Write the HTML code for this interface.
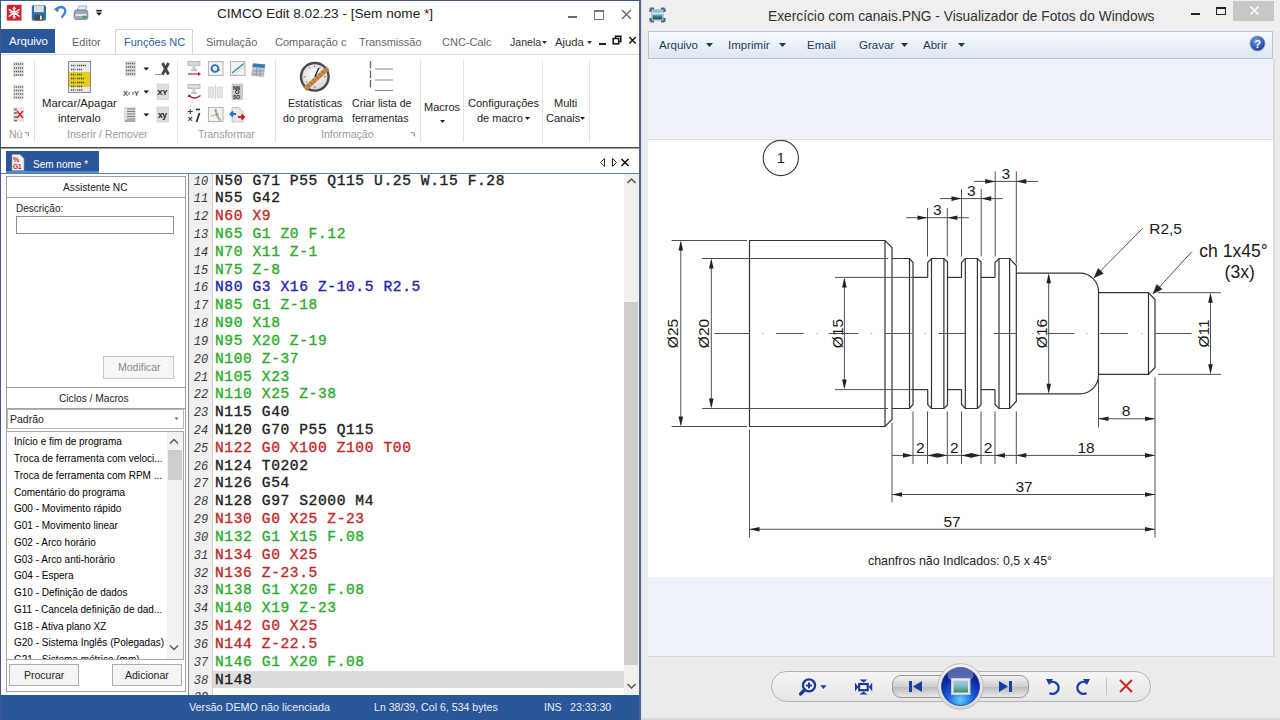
<!DOCTYPE html>
<html><head><meta charset="utf-8">
<style>
*{box-sizing:border-box}
html,body{margin:0;padding:0}
body{width:1280px;height:720px;overflow:hidden;position:relative;background:#fff;font-family:"Liberation Sans",sans-serif;color:#000}
.a{position:absolute}
.t{position:absolute;white-space:nowrap;line-height:1}
.code{font-family:"Liberation Mono",monospace;font-weight:normal;-webkit-text-stroke:0.35px currentColor;font-size:14.6px;letter-spacing:0.6px;white-space:pre;position:absolute;left:215px;line-height:17.82px;height:17.82px}
.ln{position:absolute;left:190px;width:23px;text-align:center;font-family:"Liberation Mono",monospace;font-style:italic;font-size:12px;color:#3a3a3a;line-height:17.82px;padding-left:1px;margin-top:1px}
.li{position:absolute;left:14px;font-size:10px;line-height:17px;white-space:nowrap;color:#000}
.btn{position:absolute;border:1px solid #adadad;background:#e9e9e9;font-size:11px;text-align:center}
</style></head><body>
<!-- ========== CIMCO WINDOW ========== -->
<div class="a" style="left:0;top:0;width:641px;height:720px;background:#fff"></div>
<!-- window borders -->
<div class="a" style="left:0;top:0;width:641px;height:1px;background:#3c5a8c"></div>
<div class="a" style="left:0;top:0;width:1px;height:720px;background:#3c5a8c"></div>
<div class="a" style="left:639px;top:0;width:2px;height:720px;background:#52648a"></div>
<div class="a" style="left:641px;top:0;width:1px;height:720px;background:#dde4f2"></div>

<!-- quick access toolbar -->
<svg class="a" style="left:0;top:0" width="110" height="26" viewBox="0 0 110 26">
  <rect x="6.8" y="4.8" width="14.7" height="15.8" fill="#d2202c"/>
  <g stroke="#fff" stroke-width="1.5" stroke-linecap="round"><path d="M14.2 7.2v11M9.2 9.7l10 6.5M19.2 9.7l-10 6.5"/></g>
  <g stroke="#fff" stroke-width="1.1"><path d="M12.7 8l1.5 1.5l1.5 -1.5M12.7 17.5l1.5 -1.5l1.5 1.5M9.5 12.2l1.9 0.6l-0.4 1.9M18.9 12.2l-1.9 0.6l0.4 1.9"/></g>
  <rect x="31.8" y="5.2" width="14.2" height="15.4" rx="1.5" fill="#2b70ae"/>
  <rect x="34" y="5.6" width="9.8" height="6.6" fill="#d6dde4"/>
  <rect x="34.5" y="14.6" width="8.8" height="6" fill="#4a4a4a"/>
  <rect x="40" y="15.6" width="1.8" height="4" fill="#e8e8e8"/>
  <path d="M56 9.5 Q61 5 64.5 8.5 Q67 12 61.5 17.5" fill="none" stroke="#3f7fd6" stroke-width="2.3"/>
  <path d="M53.8 9.2 L58.6 6.2 L58.4 12.4 Z" fill="#3f7fd6"/>
  <path d="M77 10 L79 6 H87 L85.5 10 Z" fill="#e8eef4" stroke="#8a98a8" stroke-width="0.8"/>
  <rect x="74.2" y="10.2" width="13.6" height="9.2" rx="2" fill="#9aa8b8" stroke="#6a7888" stroke-width="0.8"/>
  <rect x="75.5" y="14" width="11" height="2" fill="#e0e6ec"/>
  <rect x="82.5" y="15.8" width="4.2" height="2.6" fill="#3aa84a"/>
  <rect x="96.3" y="9.9" width="5.4" height="1.5" fill="#111"/>
  <path d="M96.2 12.4h5.6l-2.8 3.4z" fill="#111"/>
</svg>
<div class="t" style="left:217px;top:7px;font-size:13.6px;color:#222">CIMCO Edit 8.02.23 - [Sem nome *]</div>
<!-- window controls -->
<div class="a" style="left:568px;top:16px;width:9px;height:1.6px;background:#6a6a6a"></div>
<div class="a" style="left:594px;top:10px;width:10px;height:10px;border:1px solid #777;border-top-width:2px"></div>
<svg class="a" style="left:620px;top:8px" width="13" height="13"><path d="M2 2 L11 11 M11 2 L2 11" stroke="#6a6a6a" stroke-width="1.5"/></svg>

<!-- tabs row -->
<div class="a" style="left:1px;top:29px;width:54px;height:24px;background:#2b579a"></div>
<div class="t" style="left:9px;top:36px;font-size:11.5px;color:#fff">Arquivo</div>
<div class="t" style="left:72px;top:37px;font-size:11px;color:#666">Editor</div>
<div class="a" style="left:115px;top:29px;width:78px;height:26px;background:#fff;border:1px solid #d4d4d4;border-bottom:none"></div>
<div class="t" style="left:124px;top:37px;font-size:11px;color:#2f5d9a">Funções NC</div>
<div class="t" style="left:206px;top:37px;font-size:11px;color:#666">Simulação</div>
<div class="t" style="left:275px;top:37px;font-size:11px;color:#666">Comparação c</div>
<div class="t" style="left:359px;top:37px;font-size:11px;color:#666">Transmissão</div>
<div class="t" style="left:442px;top:37px;font-size:11px;color:#666">CNC-Calc</div>
<div class="t" style="left:510px;top:36.5px;font-size:10.6px;color:#333">Janela</div>
<svg class="a" style="left:542px;top:41px" width="6" height="4"><path d="M0 0h5l-2.5 3z" fill="#333"/></svg>
<div class="t" style="left:555px;top:36.5px;font-size:11.3px;color:#333">Ajuda</div>
<svg class="a" style="left:587px;top:41px" width="6" height="4"><path d="M0 0h5l-2.5 3z" fill="#333"/></svg>
<div class="a" style="left:599px;top:43px;width:7px;height:2px;background:#222"></div>
<svg class="a" style="left:612px;top:35px" width="10" height="10"><path d="M3.5 3V1.2H8.8V6.5H7" fill="none" stroke="#111" stroke-width="1.5"/><rect x="1.2" y="3.5" width="5.5" height="5.3" fill="none" stroke="#111" stroke-width="1.5"/></svg>
<svg class="a" style="left:628px;top:36px" width="10" height="10"><path d="M1.3 1 L7.7 7.5 M7.7 1 L1.3 7.5" stroke="#111" stroke-width="1.4"/></svg>

<!-- ribbon body -->
<div class="a" style="left:1px;top:54px;width:638px;height:1px;background:#dcdcdc"></div>
<div class="a" style="left:1px;top:147px;width:638px;height:1px;background:#4a4a4a"></div><div class="a" style="left:1px;top:148px;width:638px;height:1px;background:#a0a0a0"></div>
<!-- separators -->
<div class="a" style="left:34px;top:60px;width:1px;height:82px;background:#e4e4e4"></div>
<div class="a" style="left:177px;top:60px;width:1px;height:82px;background:#e4e4e4"></div>
<div class="a" style="left:275px;top:60px;width:1px;height:82px;background:#e4e4e4"></div>
<div class="a" style="left:420px;top:60px;width:1px;height:82px;background:#e4e4e4"></div>
<div class="a" style="left:463px;top:60px;width:1px;height:82px;background:#e4e4e4"></div>
<div class="a" style="left:542px;top:60px;width:1px;height:82px;background:#e4e4e4"></div>
<div class="a" style="left:589px;top:60px;width:1px;height:82px;background:#e4e4e4"></div>
<!-- group labels -->
<div class="t" style="left:9px;top:129px;font-size:10.5px;color:#999">Nú</div>
<div class="t" style="left:67px;top:129px;font-size:10.5px;color:#999">Inserir / Remover</div>
<div class="t" style="left:198px;top:129px;font-size:10.5px;color:#999">Transformar</div>
<div class="t" style="left:321px;top:129px;font-size:10.5px;color:#999">Informação</div>
<!-- big button labels -->
<div class="t" style="left:42px;top:98px;font-size:11.3px;color:#222">Marcar/Apagar</div>
<div class="t" style="left:58px;top:113px;font-size:11.3px;color:#222">intervalo</div>
<div class="t" style="left:288px;top:98px;font-size:10.6px;color:#222">Estatísticas</div>
<div class="t" style="left:283px;top:113px;font-size:10.6px;color:#222">do programa</div>
<div class="t" style="left:352px;top:98px;font-size:10.6px;color:#222">Criar lista de</div>
<div class="t" style="left:352px;top:113px;font-size:10.6px;color:#222">ferramentas</div>
<div class="t" style="left:424px;top:102px;font-size:11px;color:#222">Macros</div>
<svg class="a" style="left:440px;top:120px" width="6" height="4"><path d="M0 0h5l-2.5 3z" fill="#222"/></svg>
<div class="t" style="left:468px;top:98px;font-size:11px;color:#222">Configurações</div>
<div class="t" style="left:477px;top:113px;font-size:11px;color:#222">de macro</div>
<svg class="a" style="left:525px;top:117px" width="6" height="4"><path d="M0 0h5l-2.5 3z" fill="#222"/></svg>
<div class="t" style="left:554px;top:98px;font-size:11px;color:#222">Multi</div>
<div class="t" style="left:546px;top:113px;font-size:11px;color:#222">Canais</div>
<svg class="a" style="left:580px;top:117px" width="6" height="4"><path d="M0 0h5l-2.5 3z" fill="#222"/></svg>
<!-- ribbon icons -->
<svg class="a" style="left:0;top:55px" width="640" height="92" viewBox="0 55 640 92" font-family="Liberation Sans">
 <!-- Nú small icons -->
 <rect x="13" y="61.5" width="11" height="15" fill="#e2e2e2"/>
 <g stroke="#5a5a5a" stroke-width="1.6" stroke-dasharray="1.2 0.8"><path d="M14 64h9M14 68h9M14 71.5h9M14 75h9"/></g>
 <rect x="13" y="84.5" width="11" height="15" fill="#e2e2e2"/>
 <g stroke="#6a6a6a" stroke-width="1.5" stroke-dasharray="1.2 0.8"><path d="M14 87h9M14 90.5h9M14 94h9M14 97.5h9"/></g>
 <rect x="13" y="107" width="11" height="15" fill="#e6e6e6"/>
 <g stroke="#6a6a6a" stroke-width="1.4"><path d="M14 109.5h3M14 113h3M14 117h3M14 120.5h3"/></g>
 <path d="M17 111 L23 118 M23 111 L17 118" stroke="#d42828" stroke-width="1.6"/>
 <path d="M25 132.5h3.5v3.5" fill="none" stroke="#888" stroke-width="0.8"/><path d="M26 133.5l3 3" stroke="#888" stroke-width="0.8"/>
 <!-- Marcar/Apagar big icon -->
 <rect x="68.5" y="61.5" width="22" height="31" fill="#ececec" stroke="#8a8a8a"/>
 <rect x="69" y="72" width="21" height="15" fill="#e2ce1c"/>
 <g stroke="#4a4a4a" stroke-width="1.5" stroke-dasharray="1.3 0.7"><path d="M71 65.5h4.5M77 65.5h9M71 69.5h4.5M77 69.5h5M71 74.5h4.5M77 74.5h5M71 78.5h4.5M77 78.5h7M71 82.5h4.5M77 82.5h7M71 86.5h4.5M77 86.5h6M71 90h4.5M77 90h6"/></g>
 <!-- inserir group -->
 <rect x="125" y="61" width="11" height="15.5" fill="#dcdcdc"/>
 <g stroke="#666" stroke-width="1.5" stroke-dasharray="1.2 0.7"><path d="M126 63.5h9M126 67h9M126 70.5h9M126 74h9"/></g>
 <path d="M143.5 67.5h5.5l-2.75 3z" fill="#111"/>
 <path d="M155 74.5h7" stroke="#999" stroke-width="1"/>
 <path d="M162.5 63 L168.5 74.5 M168.5 63 L162.5 74.5" stroke="#444" stroke-width="2.8"/>
 <text x="123" y="95.5" font-size="7.5" font-weight="bold" fill="#555" letter-spacing="-0.3">X‹ ›Y</text>
 <path d="M143.5 90.5h5.5l-2.75 3z" fill="#111"/>
 <rect x="157" y="84" width="11.5" height="15.5" fill="#dedede" stroke="#c8c8c8" stroke-width="0.6"/>
 <text x="157.3" y="94.5" font-size="8" font-weight="bold" fill="#222" letter-spacing="-0.5">XY</text>
 <rect x="124" y="107" width="12" height="15" fill="#e0e0e0"/>
 <g stroke="#777" stroke-width="1.1"><path d="M127 109h8M127 111.5h8M127 114h8M127 116.5h8M127 119h8M125 121h10"/></g>
 <path d="M143.5 113.5h5.5l-2.75 3z" fill="#111"/>
 <rect x="157" y="107" width="11.5" height="15" fill="#dedede" stroke="#c8c8c8" stroke-width="0.6"/>
 <text x="158" y="117.5" font-size="8.5" font-weight="bold" fill="#222" letter-spacing="-0.5">xy</text>
 <!-- Transformar icons row1 -->
 <rect x="188" y="61.5" width="12" height="4" fill="#dadada" stroke="#aaa" stroke-width="0.7"/>
 <rect x="192.5" y="65.5" width="3" height="3.5" fill="#cfcfcf"/>
 <rect x="191" y="69" width="6" height="2" fill="#c4c4c4"/>
 <path d="M188 74h11.5" stroke="#b02030" stroke-width="1.2"/><path d="M201 74l-3 -2v4z" fill="#b02030"/>
 <rect x="208.5" y="61.5" width="14.5" height="14" fill="#f2f2f2" stroke="#b8b8b8" stroke-width="1.1"/>
 <circle cx="215" cy="68.5" r="3.4" fill="none" stroke="#2a6fb8" stroke-width="1.9"/>
 <path d="M217.5 69.5l2.5 -0.5l-1 2.5z" fill="#2a6fb8"/>
 <rect x="230.5" y="61.5" width="14.5" height="14" fill="#f2f2f2" stroke="#b8b8b8" stroke-width="1.1"/>
 <path d="M232 73 L244 63.5" stroke="#3a86c8" stroke-width="1.4"/><path d="M233 75 L244 66.5" stroke="#9ac040" stroke-width="1" stroke-dasharray="1 1.5"/>
 <path d="M253 63.5 l12 1 l-1.5 12 l-12 -1z" fill="#c2c8d0" stroke="#a0a8b4" stroke-width="0.5"/>
 <path d="M253 63.5 l12 1 l-0.4 3.5 l-12 -1z" fill="#3a78c0"/>
 <g stroke="#8a9098" stroke-width="0.8"><path d="M253 71h11M252.5 74h11M256.5 68v8M260 68.5v8"/></g>
 <!-- row2 -->
 <rect x="188" y="84.5" width="12" height="4" fill="#dadada" stroke="#aaa" stroke-width="0.7"/>
 <rect x="192.5" y="88.5" width="3" height="3.5" fill="#cfcfcf"/>
 <rect x="191" y="92" width="6" height="2" fill="#c4c4c4"/>
 <path d="M188.5 95.5 Q194.5 100.5 200.5 95.5" stroke="#b02030" stroke-width="1.4" fill="none"/><path d="M187.5 97l1.5 -3l2.5 2.5z" fill="#b02030"/>
 <rect x="208.5" y="87" width="5.5" height="10.5" fill="#e4e4e4" stroke="#cfcfcf" stroke-width="0.6"/>
 <rect x="217" y="87" width="5.5" height="10.5" fill="#e4e4e4" stroke="#cfcfcf" stroke-width="0.6"/>
 <path d="M215.5 84.5v15" stroke="#d6d6d6" stroke-width="1"/>
 <rect x="232" y="84" width="10.5" height="15.5" fill="#cdcdcd" stroke="#aaa" stroke-width="0.5"/>
 <text x="233" y="89.5" font-size="5" font-weight="bold" fill="#222">NN</text>
 <circle cx="237.3" cy="92" r="1.8" fill="none" stroke="#222" stroke-width="0.9"/>
 <text x="233" y="98.5" font-size="5" font-weight="bold" fill="#222">SO</text>
 <!-- row3 -->
 <text x="187.5" y="114.5" font-size="9.5" font-weight="bold" fill="#333">+</text>
 <path d="M196 109.5h4" stroke="#333" stroke-width="1.6"/>
 <text x="187.5" y="122" font-size="9" font-weight="bold" fill="#333">×</text>
 <path d="M199.5 113 L196.5 122" stroke="#333" stroke-width="1.8"/>
 <rect x="208.5" y="107.5" width="14.5" height="14" fill="#f2f2f2" stroke="#b8b8b8" stroke-width="1.1"/>
 <path d="M216 109 Q217 116 221 120 M211 116 L219 114" stroke="#a8c050" stroke-width="1" fill="none"/>
 <path d="M215 109 Q216 117 220 121" stroke="#3a86c8" stroke-width="0.9" fill="none"/>
 <path d="M232 107.5 h7 l4 4 v10.5 h-11z" fill="#e8e8e8" stroke="#aaa" stroke-width="0.6"/>
 <path d="M236 114 h-5 M233 111.5 l-2.5 2.5 l2.5 2.5" stroke="#1f78d0" stroke-width="2" fill="none"/>
 <path d="M238 117 h6 M241.5 114.5 l2.5 2.5 l-2.5 2.5" stroke="#d42020" stroke-width="2" fill="none"/>
 <!-- clock icon -->
 <defs><radialGradient id="clk" cx="0.45" cy="0.4" r="0.6"><stop offset="0" stop-color="#fafafa"/><stop offset="1" stop-color="#d8d8d8"/></radialGradient></defs>
 <circle cx="314.8" cy="76.8" r="15" fill="#4a4a4a"/>
 <circle cx="314.8" cy="76.8" r="12.6" fill="url(#clk)"/>
 <g stroke="#777" stroke-width="1"><path d="M314.8 65.5v2M314.8 86v2M303.5 76.8h2M324 76.8h2M309 67l1 1.5M320.5 67l-1 1.5M306 82.5l1.5 -1"/></g>
 <path d="M314.8 76.8 L318.8 68 M314.8 76.8 L321.5 73.5" stroke="#222" stroke-width="1.3"/>
 <path d="M305 89 L328 68" stroke="#c88a48" stroke-width="4.5"/>
 <path d="M305 89 L328 68" stroke="#8a5a28" stroke-width="4.5" stroke-dasharray="1 3" opacity="0.5"/>
 <!-- Criar lista -->
 <g stroke="#666" stroke-width="1.3"><path d="M370.5 61v7.5M370.5 70.5v7.5M370.5 80v7.5"/></g>
 <g stroke="#8a8a8a" stroke-width="1.1"><path d="M375 69h18M375 80h18M375 90.5h18"/></g>
 <path d="M411 132.5h3.5v3.5" fill="none" stroke="#888" stroke-width="0.8"/><path d="M412 133.5l3 3" stroke="#888" stroke-width="0.8"/>
</svg>
<!-- doc tab bar -->
<div class="a" style="left:6px;top:151px;width:93px;height:21px;background:#2b579a"></div>
<svg class="a" style="left:11px;top:154px" width="14" height="17"><path d="M1 0.5h8l4 4v12H1z" fill="#f4f4f4" stroke="#999" stroke-width="0.6"/><text x="2" y="8" font-family="Liberation Sans" font-size="7" font-weight="bold" fill="#c02020">%</text><text x="2" y="15" font-family="Liberation Sans" font-size="6.5" font-weight="bold" fill="#c02020">G1</text></svg>
<div class="t" style="left:33px;top:159.5px;font-size:10px;color:#fff">Sem nome *</div>
<div class="a" style="left:1px;top:173px;width:638px;height:1px;background:#5f7fb3"></div>
<div class="a" style="left:6px;top:171px;width:93px;height:3px;background:#4d8ad6"></div>
<svg class="a" style="left:599px;top:157px" width="32" height="12"><path d="M5.5 1.5 L1.5 5.5 L5.5 9.5z" fill="none" stroke="#333" stroke-width="1"/><path d="M13.5 1.5 L17.5 5.5 L13.5 9.5z" fill="none" stroke="#222" stroke-width="1"/><path d="M22.5 2 L29.5 9 M29.5 2 L22.5 9" stroke="#111" stroke-width="1.6"/></svg>

<!-- left panel -->
<div class="a" style="left:1px;top:174px;width:188px;height:522px;background:#fbfbfb"></div>
<div class="a" style="left:6px;top:176px;width:180px;height:516px;background:#fff;border:1px solid #a0a0a0"></div>
<div class="a" style="left:6px;top:197px;width:180px;height:1px;background:#a0a0a0"></div>
<div class="t" style="left:63px;top:183px;font-size:10.2px;color:#222">Assistente NC</div>
<div class="t" style="left:16px;top:204px;font-size:10px;color:#222">Descrição:</div>
<div class="a" style="left:16px;top:216px;width:158px;height:18px;border:1px solid #8f8f8f;background:#fff"></div>
<div class="a" style="left:103px;top:356px;width:71px;height:23px;border:1px solid #c4c4c4;background:#f6f6f6"></div>
<div class="t" style="left:118px;top:362px;font-size:10.5px;color:#8a8a8a">Modificar</div>
<div class="a" style="left:6px;top:387px;width:180px;height:1px;background:#a0a0a0"></div>
<div class="t" style="left:59px;top:393.5px;font-size:10.2px;color:#222">Ciclos / Macros</div>
<div class="a" style="left:6px;top:408px;width:180px;height:1px;background:#a0a0a0"></div>
<div class="a" style="left:7px;top:409px;width:177px;height:20px;border:1px solid #b8b8b8;background:#fff"></div>
<div class="t" style="left:10px;top:414px;font-size:10.5px;color:#222">Padrão</div>
<svg class="a" style="left:174px;top:417px" width="6" height="4"><path d="M0.5 0.5h4l-2 2.5z" fill="#666"/></svg>
<div class="a" style="left:6px;top:431px;width:178px;height:229px;border:1px solid #a8a8a8;background:#fff;overflow:hidden">
 <div class="a" style="left:159.5px;top:0;width:16px;height:227px;background:#f2f2f2"></div>
 <div class="a" style="left:160.5px;top:17.5px;width:14px;height:30.5px;background:#cdcdcd"></div>
 <svg class="a" style="left:162px;top:6px" width="10" height="7"><path d="M1 5.5 L5 1.5 L9 5.5" fill="none" stroke="#555" stroke-width="1.4"/></svg>
 <svg class="a" style="left:162px;top:212px" width="10" height="7"><path d="M1 1.5 L5 5.5 L9 1.5" fill="none" stroke="#555" stroke-width="1.4"/></svg>
</div>
<div class="a" style="left:6px;top:432.75px;width:160px;height:226.25px;overflow:hidden">
 <div class="li" style="left:8px;top:0.5px">Início e fim de programa</div>
 <div class="li" style="left:8px;top:17.25px">Troca de ferramenta com veloci...</div>
 <div class="li" style="left:8px;top:34px">Troca de ferramenta com RPM ...</div>
 <div class="li" style="left:8px;top:50.75px">Comentário do programa</div>
 <div class="li" style="left:8px;top:67.5px">G00 - Movimento rápido</div>
 <div class="li" style="left:8px;top:84.25px">G01 - Movimento linear</div>
 <div class="li" style="left:8px;top:101px">G02 - Arco horário</div>
 <div class="li" style="left:8px;top:117.75px">G03 - Arco anti-horário</div>
 <div class="li" style="left:8px;top:134.5px">G04 - Espera</div>
 <div class="li" style="left:8px;top:151.25px">G10 - Definição de dados</div>
 <div class="li" style="left:8px;top:168px">G11 - Cancela definição de dad...</div>
 <div class="li" style="left:8px;top:184.75px">G18 - Ativa plano XZ</div>
 <div class="li" style="left:8px;top:201.5px">G20 - Sistema Inglês (Polegadas)</div>
 <div class="li" style="left:8px;top:218.25px">G21 - Sistema métrico (mm)</div>
</div>
<div class="a" style="left:9px;top:664px;width:70px;height:22px;border:1px solid #adadad;background:#f4f4f4"></div>
<div class="t" style="left:24px;top:670px;font-size:10.5px;color:#222">Procurar</div>
<div class="a" style="left:112px;top:664px;width:70px;height:22px;border:1px solid #adadad;background:#f4f4f4"></div>
<div class="t" style="left:125px;top:670px;font-size:10.5px;color:#222">Adicionar</div>

<!-- editor -->
<div class="a" style="left:188px;top:173px;width:1px;height:523px;background:#8c8c8c"></div>
<div class="a" style="left:189px;top:173px;width:24px;height:523px;background:#f0f0f0"></div>
<div class="a" style="left:212px;top:173px;width:1px;height:523px;background:#cfcfcf"></div>
<div class="a" style="left:213px;top:670.5px;width:411px;height:17.8px;background:#dcdcdc"></div>
<div class="a" style="left:624px;top:173px;width:15px;height:523px;background:#f0f0f0"></div>
<div class="a" style="left:624px;top:302px;width:14px;height:363px;background:#cdcdcd"></div>
<svg class="a" style="left:626px;top:177px" width="11" height="8"><path d="M1.5 6 L5.5 2 L9.5 6" fill="none" stroke="#555" stroke-width="1.5"/></svg>
<svg class="a" style="left:626px;top:682px" width="11" height="8"><path d="M1.5 2 L5.5 6 L9.5 2" fill="none" stroke="#555" stroke-width="1.5"/></svg>
<div class="a" style="left:1px;top:173px;width:638px;height:1px;background:#5f7fb3"></div>
<div class="a" style="left:189px;top:173px;width:435px;height:522px;overflow:hidden">
<div class="ln" style="left:0;top:-0.46px">10</div>
<div class="code" style="left:26px;top:-0.46px;color:#202020">N50 G71 P55 Q115 U.25 W.15 F.28</div>
<div class="ln" style="left:0;top:17.36px">11</div>
<div class="code" style="left:26px;top:17.36px;color:#202020">N55 G42</div>
<div class="ln" style="left:0;top:35.18px">12</div>
<div class="code" style="left:26px;top:35.18px;color:#c02828">N60 X9</div>
<div class="ln" style="left:0;top:53.00px">13</div>
<div class="code" style="left:26px;top:53.00px;color:#2aac2a">N65 G1 Z0 F.12</div>
<div class="ln" style="left:0;top:70.82px">14</div>
<div class="code" style="left:26px;top:70.82px;color:#2aac2a">N70 X11 Z-1</div>
<div class="ln" style="left:0;top:88.64px">15</div>
<div class="code" style="left:26px;top:88.64px;color:#2aac2a">N75 Z-8</div>
<div class="ln" style="left:0;top:106.46px">16</div>
<div class="code" style="left:26px;top:106.46px;color:#2222a8">N80 G3 X16 Z-10.5 R2.5</div>
<div class="ln" style="left:0;top:124.28px">17</div>
<div class="code" style="left:26px;top:124.28px;color:#2aac2a">N85 G1 Z-18</div>
<div class="ln" style="left:0;top:142.10px">18</div>
<div class="code" style="left:26px;top:142.10px;color:#2aac2a">N90 X18</div>
<div class="ln" style="left:0;top:159.92px">19</div>
<div class="code" style="left:26px;top:159.92px;color:#2aac2a">N95 X20 Z-19</div>
<div class="ln" style="left:0;top:177.74px">20</div>
<div class="code" style="left:26px;top:177.74px;color:#2aac2a">N100 Z-37</div>
<div class="ln" style="left:0;top:195.56px">21</div>
<div class="code" style="left:26px;top:195.56px;color:#2aac2a">N105 X23</div>
<div class="ln" style="left:0;top:213.38px">22</div>
<div class="code" style="left:26px;top:213.38px;color:#2aac2a">N110 X25 Z-38</div>
<div class="ln" style="left:0;top:231.20px">23</div>
<div class="code" style="left:26px;top:231.20px;color:#202020">N115 G40</div>
<div class="ln" style="left:0;top:249.02px">24</div>
<div class="code" style="left:26px;top:249.02px;color:#202020">N120 G70 P55 Q115</div>
<div class="ln" style="left:0;top:266.84px">25</div>
<div class="code" style="left:26px;top:266.84px;color:#c02828">N122 G0 X100 Z100 T00</div>
<div class="ln" style="left:0;top:284.66px">26</div>
<div class="code" style="left:26px;top:284.66px;color:#202020">N124 T0202</div>
<div class="ln" style="left:0;top:302.48px">27</div>
<div class="code" style="left:26px;top:302.48px;color:#202020">N126 G54</div>
<div class="ln" style="left:0;top:320.30px">28</div>
<div class="code" style="left:26px;top:320.30px;color:#202020">N128 G97 S2000 M4</div>
<div class="ln" style="left:0;top:338.12px">29</div>
<div class="code" style="left:26px;top:338.12px;color:#c02828">N130 G0 X25 Z-23</div>
<div class="ln" style="left:0;top:355.94px">30</div>
<div class="code" style="left:26px;top:355.94px;color:#2aac2a">N132 G1 X15 F.08</div>
<div class="ln" style="left:0;top:373.76px">31</div>
<div class="code" style="left:26px;top:373.76px;color:#c02828">N134 G0 X25</div>
<div class="ln" style="left:0;top:391.58px">32</div>
<div class="code" style="left:26px;top:391.58px;color:#c02828">N136 Z-23.5</div>
<div class="ln" style="left:0;top:409.40px">33</div>
<div class="code" style="left:26px;top:409.40px;color:#2aac2a">N138 G1 X20 F.08</div>
<div class="ln" style="left:0;top:427.22px">34</div>
<div class="code" style="left:26px;top:427.22px;color:#2aac2a">N140 X19 Z-23</div>
<div class="ln" style="left:0;top:445.04px">35</div>
<div class="code" style="left:26px;top:445.04px;color:#c02828">N142 G0 X25</div>
<div class="ln" style="left:0;top:462.86px">36</div>
<div class="code" style="left:26px;top:462.86px;color:#c02828">N144 Z-22.5</div>
<div class="ln" style="left:0;top:480.68px">37</div>
<div class="code" style="left:26px;top:480.68px;color:#2aac2a">N146 G1 X20 F.08</div>
<div class="ln" style="left:0;top:498.50px">38</div>
<div class="code" style="left:26px;top:498.50px;color:#202020">N148</div>
<div class="ln" style="left:0;top:516.32px">39</div>
</div><!-- status bar -->
<div class="a" style="left:1px;top:695px;width:638px;height:25px;background:#2b579a"></div>
<div class="t" style="left:189px;top:702px;font-size:10.8px;color:#e8eef8">Versão DEMO não licenciada</div>
<div class="t" style="left:374px;top:702px;font-size:10.6px;color:#e8eef8">Ln 38/39, Col 6, 534 bytes</div>
<div class="t" style="left:544px;top:702px;font-size:10.6px;color:#e8eef8">INS</div>
<div class="t" style="left:570px;top:702px;font-size:10.6px;color:#e8eef8">23:33:30</div>
<!-- ========== PHOTO VIEWER ========== -->
<div class="a" style="left:642px;top:0;width:638px;height:720px;background:#ebebeb"></div>
<div class="a" style="left:642px;top:0;width:638px;height:30px;background:#efefef"></div>
<svg class="a" style="left:649px;top:7px" width="18" height="16"><defs><linearGradient id="tg" x1="0" y1="0" x2="0" y2="1"><stop offset="0" stop-color="#6aa0c8"/><stop offset="0.35" stop-color="#c8f0f4"/><stop offset="0.6" stop-color="#4a8a7a"/><stop offset="1" stop-color="#1a4a5a"/></linearGradient></defs><rect x="2.5" y="2.5" width="12" height="11" fill="#cfe4f0" stroke="#b8c8d4" stroke-width="1"/><rect x="3.5" y="3.5" width="10" height="9" fill="url(#tg)"/><path d="M1.5 1.5h3.5M1.5 1.5v3.5M15.5 1.5h-3.5M15.5 1.5v3.5M1.5 14.5h3.5M1.5 14.5v-3.5M15.5 14.5h-3.5M15.5 14.5v-3.5" stroke="#3d6a94" stroke-width="2.2"/></svg>
<div class="t" style="left:768px;top:10px;font-size:13.75px;color:#333">Exercício com canais.PNG - Visualizador de Fotos do Windows</div>
<div class="a" style="left:1191px;top:13px;width:9px;height:2px;background:#222"></div>
<div class="a" style="left:1216px;top:7px;width:10px;height:8px;border:1px solid #222;border-top-width:2px"></div>
<div class="a" style="left:1233px;top:1px;width:41px;height:20px;background:#c7c7c7"></div>
<svg class="a" style="left:1249px;top:5px" width="11" height="11"><path d="M1.5 1.5L9.5 9.5M9.5 1.5L1.5 9.5" stroke="#fff" stroke-width="1.5"/></svg>
<!-- menu bar -->
<div class="a" style="left:648px;top:31px;width:625px;height:28px;border:1px solid #b9c4d4;background:linear-gradient(#f7f9fd,#e9eff8 55%,#dde6f2)"></div>
<div class="t" style="left:659px;top:40px;font-size:11.5px;color:#1e395b">Arquivo</div>
<svg class="a" style="left:706px;top:43px" width="8" height="5"><path d="M0 0h7l-3.5 4z" fill="#1e395b"/></svg>
<div class="t" style="left:728px;top:40px;font-size:11.5px;color:#1e395b">Imprimir</div>
<svg class="a" style="left:779px;top:43px" width="8" height="5"><path d="M0 0h7l-3.5 4z" fill="#1e395b"/></svg>
<div class="t" style="left:807px;top:40px;font-size:11.5px;color:#1e395b">Email</div>
<div class="t" style="left:859px;top:40px;font-size:11.5px;color:#1e395b">Gravar</div>
<svg class="a" style="left:901px;top:43px" width="8" height="5"><path d="M0 0h7l-3.5 4z" fill="#1e395b"/></svg>
<div class="t" style="left:923px;top:40px;font-size:11.5px;color:#1e395b">Abrir</div>
<svg class="a" style="left:958px;top:43px" width="8" height="5"><path d="M0 0h7l-3.5 4z" fill="#1e395b"/></svg>
<svg class="a" style="left:1249px;top:35px" width="18" height="18"><defs><radialGradient id="hg" cx="0.4" cy="0.3" r="0.7"><stop offset="0" stop-color="#6f9ce8"/><stop offset="1" stop-color="#1b3f9a"/></radialGradient></defs><circle cx="8.5" cy="8.5" r="7.5" fill="url(#hg)" stroke="#8a9ab8" stroke-width="1"/><text x="8.5" y="13" font-family="Liberation Sans" font-size="11" font-weight="bold" fill="#fff" text-anchor="middle">?</text></svg>
<!-- content -->
<div class="a" style="left:648px;top:59px;width:627px;height:598px;background:#eef1f9;border-bottom:1px solid #d6d9de;border-right:2px solid #dcdcdc"></div>
<div class="a" style="left:648px;top:139px;width:625px;height:1px;background:#d9dde3"></div><div class="a" style="left:648px;top:140px;width:625px;height:437px;background:#fff"></div>
<!-- bottom toolbar -->
<div class="a" style="left:771px;top:671px;width:380px;height:31px;border-radius:16px;border:1px solid #b5b5b5;background:linear-gradient(#f4f4f4,#e6e6e6)"></div>
<div class="a" style="left:892px;top:675px;width:137px;height:23px;border-radius:9px;border:1px solid #9a9a9a;background:linear-gradient(#f2f2f2,#d0d0d0 50%,#bdbdbd 55%,#e8e8e8)"></div>
<svg class="a" style="left:936px;top:662px" width="50" height="50"><defs><radialGradient id="cg" cx="0.5" cy="0.85" r="0.75"><stop offset="0" stop-color="#5fd0ff"/><stop offset="0.45" stop-color="#1a5ae0"/><stop offset="0.8" stop-color="#0a2aa8"/><stop offset="1" stop-color="#0a2080"/></radialGradient><linearGradient id="ig" x1="0" y1="0" x2="0" y2="1"><stop offset="0" stop-color="#a8d0e0"/><stop offset="0.5" stop-color="#7ab8c8"/><stop offset="1" stop-color="#3a8a5a"/></linearGradient><linearGradient id="rg" x1="0" y1="0" x2="0" y2="1"><stop offset="0" stop-color="#f4f4f4"/><stop offset="1" stop-color="#d4d4d4"/></linearGradient></defs><circle cx="24.5" cy="24.5" r="22.8" fill="url(#rg)" stroke="#b0b0b0" stroke-width="0.8"/><circle cx="24.5" cy="24.5" r="19" fill="url(#cg)" stroke="#2a3a90" stroke-width="0.8"/><ellipse cx="24.5" cy="13" rx="13" ry="7.5" fill="#fff" opacity="0.3"/><rect x="15.5" y="16.5" width="18.5" height="16" fill="#e8e8e8" stroke="#c8c8c8" stroke-width="1"/><rect x="17.5" y="18.5" width="14.5" height="12" fill="url(#ig)"/></svg>
<!-- icons -->
<svg class="a" style="left:796px;top:676px" width="34" height="22"><circle cx="13" cy="9.4" r="6" fill="#fff" stroke="#1a3a9a" stroke-width="2.4"/><path d="M10 9.4h6M13 6.4v6" stroke="#1a3a9a" stroke-width="2"/><path d="M8.5 14 L4.5 18" stroke="#1a3a9a" stroke-width="3.2" stroke-linecap="round"/><path d="M24.3 9.3h6.3l-3.15 3.7z" fill="#1a3a9a"/></svg>
<svg class="a" style="left:853px;top:677px" width="22" height="20"><rect x="6.2" y="7" width="8.5" height="6.2" fill="#fff" stroke="#1a3a9a" stroke-width="2.2"/><path d="M2 5.5v9l3.3 -4.5z M19.2 5.5v9l-3.3 -4.5z M6.5 2.5h8l-4 3z M6.5 17.5h8l-4 -3z" fill="#1a3a9a"/></svg>
<svg class="a" style="left:908px;top:680px" width="16" height="13"><rect x="1" y="1" width="3" height="11" fill="#1a3ea8"/><path d="M14 1 V12 L5 6.5z" fill="#1a3ea8"/></svg>
<svg class="a" style="left:998px;top:680px" width="16" height="13"><rect x="11" y="1" width="3" height="11" fill="#1a3ea8"/><path d="M1 1 V12 L10 6.5z" fill="#1a3ea8"/></svg>
<svg class="a" style="left:1044px;top:677px" width="18" height="19"><path d="M5 6 A6 6 0 1 1 5.5 16" fill="none" stroke="#1a3ea8" stroke-width="2.4"/><path d="M2 2 L9 2 L5 8z" fill="#1a3ea8"/></svg>
<svg class="a" style="left:1074px;top:677px" width="18" height="19"><path d="M13 6 A6 6 0 1 0 12.5 16" fill="none" stroke="#1a3ea8" stroke-width="2.4"/><path d="M16 2 L9 2 L13 8z" fill="#1a3ea8"/></svg>
<div class="a" style="left:1106px;top:677px;width:1px;height:18px;background:#c4c4c4"></div>
<svg class="a" style="left:1118px;top:678px" width="16" height="16"><path d="M2 2L14 14M14 2L2 14" stroke="#c82828" stroke-width="2"/></svg>
<div class="a" style="left:642px;top:718px;width:638px;height:2px;background:#dadada"></div>
<!-- drawing -->
<svg class="a" style="left:648px;top:140px" width="625" height="437" viewBox="648 140 625 437"><path d="M749.5 240.5 H885 L892 247.5 V419.5 L885 426.5 H749.5 Z" stroke="#333" stroke-width="1.2" fill="none"/><line x1="885" y1="240.5" x2="885" y2="426.5" stroke="#333" stroke-width="1.2" /><path d="M892 258.5 H909.5 L913 262.5 V404.5 L909.5 408.5 H892" stroke="#333" stroke-width="1.2" fill="none"/><line x1="909.5" y1="258.5" x2="909.5" y2="408.5" stroke="#333" stroke-width="1.2" /><line x1="913" y1="277.4" x2="927.7" y2="277.4" stroke="#333" stroke-width="1.2" /><line x1="913" y1="389.6" x2="927.7" y2="389.6" stroke="#333" stroke-width="1.2" /><line x1="947.5" y1="277.4" x2="961.5" y2="277.4" stroke="#333" stroke-width="1.2" /><line x1="947.5" y1="389.6" x2="961.5" y2="389.6" stroke="#333" stroke-width="1.2" /><line x1="981" y1="277.4" x2="995" y2="277.4" stroke="#333" stroke-width="1.2" /><line x1="981" y1="389.6" x2="995" y2="389.6" stroke="#333" stroke-width="1.2" /><path d="M927.7 277.4 V262.5 L931.5 258.5 H943.9 L947.5 262.1 V404.9 L943.9 408.5 H931.5 L927.7 404.5 V389.6" stroke="#333" stroke-width="1.2" fill="none"/><line x1="931.5" y1="258.5" x2="931.5" y2="408.5" stroke="#333" stroke-width="1.2" /><line x1="943.9" y1="258.5" x2="943.9" y2="408.5" stroke="#333" stroke-width="1.2" /><path d="M961.5 277.4 V262.5 L965.3 258.5 H977.4 L981 262.1 V404.9 L977.4 408.5 H965.3 L961.5 404.5 V389.6" stroke="#333" stroke-width="1.2" fill="none"/><line x1="965.3" y1="258.5" x2="965.3" y2="408.5" stroke="#333" stroke-width="1.2" /><line x1="977.4" y1="258.5" x2="977.4" y2="408.5" stroke="#333" stroke-width="1.2" /><path d="M995 277.4 V262.5 L999 258.5 H1009.5999999999999 L1016.3 265.5 V401.5 L1009.5999999999999 408.5 H999 L995 404.5 V389.6" stroke="#333" stroke-width="1.2" fill="none"/><line x1="999" y1="258.5" x2="999" y2="408.5" stroke="#333" stroke-width="1.2" /><line x1="1009.5999999999999" y1="258.5" x2="1009.5999999999999" y2="408.5" stroke="#333" stroke-width="1.2" /><path d="M1016.3 273.2 H1080 A18.5 18.5 0 0 1 1098.5 291.7 V375.3 A18.5 18.5 0 0 1 1080 393.8 H1016.3" stroke="#333" stroke-width="1.2" fill="none"/><path d="M1098.5 292.7 H1148.5 V374.3 H1098.5" stroke="#333" stroke-width="1.2" fill="none"/><path d="M1148.5 292.7 L1155 299.5 V367.5 L1148.5 374.3" stroke="#333" stroke-width="1.2" fill="none"/><line x1="714.5" y1="333.5" x2="749.8" y2="333.5" stroke="#555" stroke-width="1.0" /><line x1="776" y1="333.5" x2="803.8" y2="333.5" stroke="#555" stroke-width="1.0" /><line x1="828.7" y1="333.5" x2="858.4" y2="333.5" stroke="#555" stroke-width="1.0" /><line x1="885" y1="333.5" x2="911.7" y2="333.5" stroke="#555" stroke-width="1.0" /><line x1="938.6" y1="333.5" x2="965.6" y2="333.5" stroke="#555" stroke-width="1.0" /><line x1="993.7" y1="333.5" x2="1017" y2="333.5" stroke="#555" stroke-width="1.0" /><line x1="1047.5" y1="333.5" x2="1074.5" y2="333.5" stroke="#555" stroke-width="1.0" /><line x1="1100" y1="333.5" x2="1128" y2="333.5" stroke="#555" stroke-width="1.0" /><line x1="1155" y1="333.5" x2="1191.6" y2="333.5" stroke="#555" stroke-width="1.0" /><line x1="762.0" y1="333.5" x2="763.4000000000001" y2="333.5" stroke="#aaa" stroke-width="1.0" /><line x1="816.3" y1="333.5" x2="817.7" y2="333.5" stroke="#aaa" stroke-width="1.0" /><line x1="870.6999999999999" y1="333.5" x2="872.1" y2="333.5" stroke="#aaa" stroke-width="1.0" /><line x1="924.3" y1="333.5" x2="925.7" y2="333.5" stroke="#aaa" stroke-width="1.0" /><line x1="979.3" y1="333.5" x2="980.7" y2="333.5" stroke="#aaa" stroke-width="1.0" /><line x1="1032.3" y1="333.5" x2="1033.7" y2="333.5" stroke="#aaa" stroke-width="1.0" /><line x1="1086.3" y1="333.5" x2="1087.7" y2="333.5" stroke="#aaa" stroke-width="1.0" /><line x1="1141.3" y1="333.5" x2="1142.7" y2="333.5" stroke="#aaa" stroke-width="1.0" /><line x1="671.6" y1="240.5" x2="747" y2="240.5" stroke="#505050" stroke-width="1.0" /><line x1="671.6" y1="426.5" x2="747" y2="426.5" stroke="#505050" stroke-width="1.0" /><line x1="702" y1="258.5" x2="888" y2="258.5" stroke="#505050" stroke-width="1.0" /><line x1="702" y1="408.5" x2="888" y2="408.5" stroke="#505050" stroke-width="1.0" /><line x1="835" y1="277.4" x2="913" y2="277.4" stroke="#505050" stroke-width="1.0" /><line x1="835" y1="389.6" x2="913" y2="389.6" stroke="#505050" stroke-width="1.0" /><line x1="1158" y1="292.7" x2="1221" y2="292.7" stroke="#505050" stroke-width="1.0" /><line x1="1158" y1="374.3" x2="1221" y2="374.3" stroke="#505050" stroke-width="1.0" /><line x1="927.5" y1="208" x2="927.5" y2="256.5" stroke="#505050" stroke-width="1.0" /><line x1="947.3" y1="208" x2="947.3" y2="256.5" stroke="#505050" stroke-width="1.0" /><line x1="961.5" y1="189" x2="961.5" y2="256.5" stroke="#505050" stroke-width="1.0" /><line x1="981.2" y1="189" x2="981.2" y2="256.5" stroke="#505050" stroke-width="1.0" /><line x1="995.2" y1="171.4" x2="995.2" y2="256.5" stroke="#505050" stroke-width="1.0" /><line x1="1016.3" y1="171.4" x2="1016.3" y2="263.5" stroke="#505050" stroke-width="1.0" /><line x1="913" y1="411.5" x2="913" y2="464" stroke="#505050" stroke-width="1.0" /><line x1="927.5" y1="411.5" x2="927.5" y2="464" stroke="#505050" stroke-width="1.0" /><line x1="947.3" y1="411.5" x2="947.3" y2="464" stroke="#505050" stroke-width="1.0" /><line x1="961.5" y1="411.5" x2="961.5" y2="464" stroke="#505050" stroke-width="1.0" /><line x1="981" y1="411.5" x2="981" y2="464" stroke="#505050" stroke-width="1.0" /><line x1="995" y1="411.5" x2="995" y2="464" stroke="#505050" stroke-width="1.0" /><line x1="1016.3" y1="411.5" x2="1016.3" y2="464" stroke="#505050" stroke-width="1.0" /><line x1="892" y1="422.5" x2="892" y2="502.5" stroke="#505050" stroke-width="1.0" /><line x1="1098.5" y1="377.3" x2="1098.5" y2="427.5" stroke="#505050" stroke-width="1.0" /><line x1="1155" y1="377.3" x2="1155" y2="537.5" stroke="#505050" stroke-width="1.0" /><line x1="749.5" y1="429.5" x2="749.5" y2="537.5" stroke="#505050" stroke-width="1.0" /><line x1="680.8" y1="242.5" x2="680.8" y2="424.5" stroke="#505050" stroke-width="1.0" /><polygon points="680.80,240.50 678.50,250.50 683.10,250.50" fill="#222"/><polygon points="680.80,426.50 678.50,416.50 683.10,416.50" fill="#222"/><text x="678.2" y="333.5" font-family="Liberation Sans" font-size="15.5" fill="#1a1a1a" text-anchor="middle" transform="rotate(-90 678.2 333.5)">Ø25</text><line x1="711.3" y1="260.5" x2="711.3" y2="406.5" stroke="#505050" stroke-width="1.0" /><polygon points="711.30,258.50 709.00,268.50 713.60,268.50" fill="#222"/><polygon points="711.30,408.50 709.00,398.50 713.60,398.50" fill="#222"/><text x="708.6" y="333.5" font-family="Liberation Sans" font-size="15.5" fill="#1a1a1a" text-anchor="middle" transform="rotate(-90 708.6 333.5)">Ø20</text><line x1="844.4" y1="279.4" x2="844.4" y2="387.6" stroke="#505050" stroke-width="1.0" /><polygon points="844.40,277.40 842.10,287.40 846.70,287.40" fill="#222"/><polygon points="844.40,389.60 842.10,379.60 846.70,379.60" fill="#222"/><text x="842.5" y="333.5" font-family="Liberation Sans" font-size="15.5" fill="#1a1a1a" text-anchor="middle" transform="rotate(-90 842.5 333.5)">Ø15</text><line x1="1048.7" y1="275.2" x2="1048.7" y2="391.8" stroke="#505050" stroke-width="1.0" /><polygon points="1048.70,273.20 1046.40,283.20 1051.00,283.20" fill="#222"/><polygon points="1048.70,393.80 1046.40,383.80 1051.00,383.80" fill="#222"/><text x="1046.5" y="333.5" font-family="Liberation Sans" font-size="15.5" fill="#1a1a1a" text-anchor="middle" transform="rotate(-90 1046.5 333.5)">Ø16</text><line x1="1210.5" y1="294.7" x2="1210.5" y2="372.3" stroke="#505050" stroke-width="1.0" /><polygon points="1210.50,292.70 1208.20,302.70 1212.80,302.70" fill="#222"/><polygon points="1210.50,374.30 1208.20,364.30 1212.80,364.30" fill="#222"/><text x="1208.5" y="333.5" font-family="Liberation Sans" font-size="15.5" fill="#1a1a1a" text-anchor="middle" transform="rotate(-90 1208.5 333.5)">Ø11</text><line x1="906" y1="217.7" x2="968.9" y2="217.7" stroke="#505050" stroke-width="1.0" /><polygon points="927.50,217.70 917.50,215.40 917.50,220.00" fill="#222"/><polygon points="947.30,217.70 957.30,215.40 957.30,220.00" fill="#222"/><text x="937.4" y="215.2" font-family="Liberation Sans" font-size="15.5" fill="#1a1a1a" text-anchor="middle">3</text><line x1="940" y1="198.6" x2="1002.9" y2="198.6" stroke="#505050" stroke-width="1.0" /><polygon points="961.50,198.60 951.50,196.30 951.50,200.90" fill="#222"/><polygon points="981.20,198.60 991.20,196.30 991.20,200.90" fill="#222"/><text x="971.35" y="196.1" font-family="Liberation Sans" font-size="15.5" fill="#1a1a1a" text-anchor="middle">3</text><line x1="974" y1="181.4" x2="1038" y2="181.4" stroke="#505050" stroke-width="1.0" /><polygon points="995.20,181.40 985.20,179.10 985.20,183.70" fill="#222"/><polygon points="1016.30,181.40 1026.30,179.10 1026.30,183.70" fill="#222"/><text x="1005.75" y="178.9" font-family="Liberation Sans" font-size="15.5" fill="#1a1a1a" text-anchor="middle">3</text><line x1="892" y1="455.4" x2="1155" y2="455.4" stroke="#505050" stroke-width="1.0" /><polygon points="913.00,455.40 903.00,453.10 903.00,457.70" fill="#222"/><polygon points="927.50,455.40 937.50,453.10 937.50,457.70" fill="#222"/><polygon points="947.30,455.40 937.30,453.10 937.30,457.70" fill="#222"/><polygon points="961.50,455.40 971.50,453.10 971.50,457.70" fill="#222"/><polygon points="981.00,455.40 971.00,453.10 971.00,457.70" fill="#222"/><polygon points="995.00,455.40 1005.00,453.10 1005.00,457.70" fill="#222"/><polygon points="1016.30,455.40 1026.30,453.10 1026.30,457.70" fill="#222"/><polygon points="1155.00,455.40 1145.00,453.10 1145.00,457.70" fill="#222"/><text x="920.25" y="452.9" font-family="Liberation Sans" font-size="15.5" fill="#1a1a1a" text-anchor="middle">2</text><text x="954.4" y="452.9" font-family="Liberation Sans" font-size="15.5" fill="#1a1a1a" text-anchor="middle">2</text><text x="988.0" y="452.9" font-family="Liberation Sans" font-size="15.5" fill="#1a1a1a" text-anchor="middle">2</text><text x="1086" y="452.9" font-family="Liberation Sans" font-size="15.5" fill="#1a1a1a" text-anchor="middle">18</text><line x1="1098.5" y1="418.75" x2="1155" y2="418.75" stroke="#505050" stroke-width="1.0" /><polygon points="1098.50,418.75 1108.50,416.45 1108.50,421.05" fill="#222"/><polygon points="1155.00,418.75 1145.00,416.45 1145.00,421.05" fill="#222"/><text x="1126" y="416.25" font-family="Liberation Sans" font-size="15.5" fill="#1a1a1a" text-anchor="middle">8</text><line x1="892" y1="494.5" x2="1155" y2="494.5" stroke="#505050" stroke-width="1.0" /><polygon points="892.00,494.50 902.00,492.20 902.00,496.80" fill="#222"/><polygon points="1155.00,494.50 1145.00,492.20 1145.00,496.80" fill="#222"/><text x="1024" y="492.0" font-family="Liberation Sans" font-size="15.5" fill="#1a1a1a" text-anchor="middle">37</text><line x1="749.5" y1="529.25" x2="1155" y2="529.25" stroke="#505050" stroke-width="1.0" /><polygon points="749.50,529.25 759.50,526.95 759.50,531.55" fill="#222"/><polygon points="1155.00,529.25 1145.00,526.95 1145.00,531.55" fill="#222"/><text x="952" y="526.75" font-family="Liberation Sans" font-size="15.5" fill="#1a1a1a" text-anchor="middle">57</text><line x1="1100" y1="271.5" x2="1142.5" y2="228.5" stroke="#505050" stroke-width="1.0" /><path d="M1094 277.8 L1098.2 268.6 L1103.3 273.6 Z" stroke="#222" stroke-width="0.5" fill="#222"/><text x="1149.2" y="234.1" font-family="Liberation Sans" font-size="15.5" fill="#1a1a1a" text-anchor="start">R2,5</text><line x1="1159" y1="287.5" x2="1191.8" y2="251.7" stroke="#505050" stroke-width="1.0" /><path d="M1153 293.75 L1156.8 284.4 L1162 289.2 Z" stroke="#222" stroke-width="0.5" fill="#222"/><text x="1199.2" y="256.9" font-family="Liberation Sans" font-size="17.6" fill="#1a1a1a" text-anchor="start">ch 1x45°</text><text x="1224.6" y="278.4" font-family="Liberation Sans" font-size="17.6" fill="#1a1a1a" text-anchor="start">(3x)</text><circle cx="780.8" cy="158" r="17.6" fill="none" stroke="#333" stroke-width="1.1"/><text x="780.8" y="163.3" font-family="Liberation Sans" font-size="14.5" fill="#1a1a1a" text-anchor="middle">1</text><text x="868" y="565" font-family="Liberation Sans" font-size="12.4" fill="#222" text-anchor="start">chanfros não Indlcados: 0,5 x 45°</text></svg>
</body></html>
